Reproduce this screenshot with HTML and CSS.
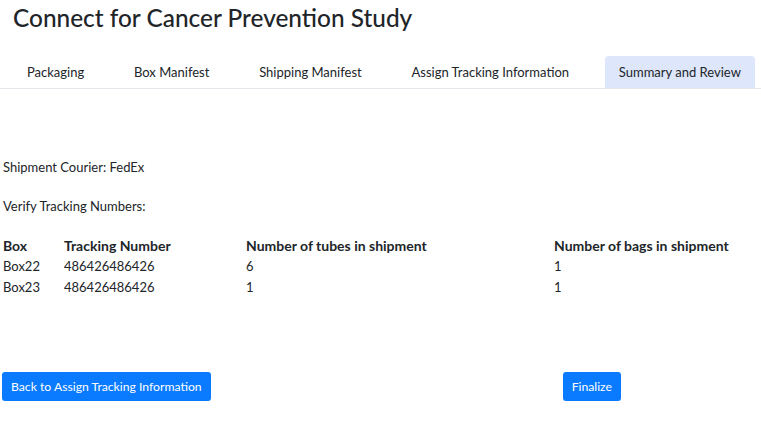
FILE: index.html
```html
<!DOCTYPE html>
<html lang="en">
<head>
  <meta charset="UTF-8">
  <title>Connect for Cancer Prevention Study</title>
  <link rel="stylesheet" href="styles.css">
</head>
<body>
  <h1 class="title">Connect for Cancer Prevention Study</h1>

  <div class="tabs">
    <div class="tab">Packaging</div>
    <div class="tab">Box Manifest</div>
    <div class="tab">Shipping Manifest</div>
    <div class="tab">Assign Tracking Information</div>
    <div class="tab active">Summary and Review</div>
  </div>

  <div class="content">
    <p class="courier">Shipment Courier: FedEx</p>
    <p class="verify">Verify Tracking Numbers:</p>

    <table class="summary">
      <tr>
        <th class="c-box">Box</th>
        <th class="c-track">Tracking Number</th>
        <th class="c-tubes">Number of tubes in shipment</th>
        <th>Number of bags in shipment</th>
      </tr>
      <tr>
        <td>Box22</td>
        <td>486426486426</td>
        <td>6</td>
        <td>1</td>
      </tr>
      <tr>
        <td>Box23</td>
        <td>486426486426</td>
        <td>1</td>
        <td>1</td>
      </tr>
    </table>

    <div class="actions">
      <button class="btn back">Back to Assign Tracking Information</button>
      <button class="btn">Finalize</button>
    </div>
  </div>
</body>
</html>
```

FILE: styles.css
```css
body { font-family: Lato, "Open Sans", sans-serif; color: #212529; margin: 0; padding: 0; background: #fff; font-size: 13px; }
.title { font-size: 24.4px; font-weight: 500; margin: 0; padding: 3px 0 0 13px; line-height: 30px; }
.tabs { display: flex; margin-top: 23px; padding-left: 13px; border-bottom: 1px solid #e3e6ea; white-space: nowrap; }
.tab { padding: 0 14px; margin-right: 21.75px; line-height: 32px; height: 32px; border-radius: 4px 4px 0 0; }
.tab.active { background: #dde6fb; margin-right: 0; }
.content { padding: 0 2px; }
.courier { margin: 68px 0 0 1px; line-height: 20px; }
.verify { margin: 19px 0 0 1px; line-height: 20px; }
.summary { border-collapse: collapse; margin-top: 19px; white-space: nowrap; }
.summary th, .summary td { padding: 0; text-align: left; line-height: 21px; }
.summary th { font-weight: 700; font-size: 14px; }
.c-box { width: 61px; padding-left: 1px !important; }
.c-track { width: 182px; }
.c-tubes { width: 308px; }
.summary td:first-child { padding-left: 1px; }
.actions { display: flex; margin-top: 74px; }
.btn { background: #0a7bff; color: #fff; border: none; border-radius: 3px; font-family: inherit; font-size: 12.2px; height: 29px; padding: 0 9px; cursor: pointer; }
.back { margin-right: 352px; }
```
